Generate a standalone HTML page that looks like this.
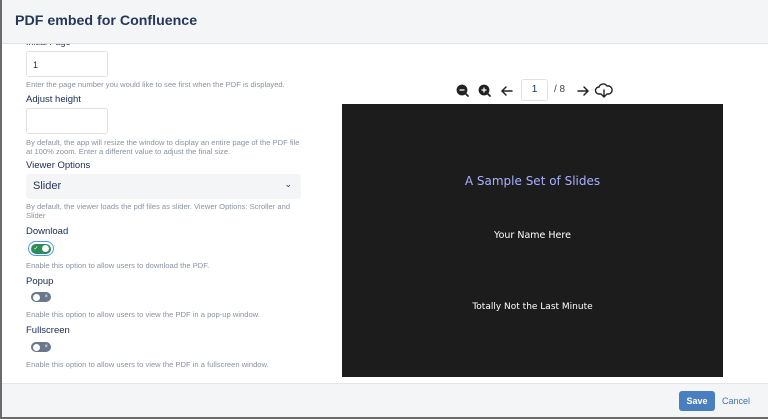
<!DOCTYPE html>
<html><head><style>
*{box-sizing:border-box;margin:0;padding:0}
body{width:768px;height:419px;background:#6b6b6b;font-family:"Liberation Sans",sans-serif;position:relative;overflow:hidden}
.dlg{position:absolute;left:2px;top:0;width:766px;height:417px;background:#fff;overflow:hidden}
.hdr{position:absolute;left:0;top:0;right:0;height:44px;background:#f4f5f7;border-bottom:1px solid #dfe1e6;z-index:2}
.hdr h1{position:absolute;left:13px;top:13px;font-size:14.2px;font-weight:bold;color:#253858}
.ftr{position:absolute;left:0;top:383px;right:0;bottom:0;background:#f4f5f7;border-top:1px solid #e4e5e8}
.t{position:absolute;font-size:9.5px;color:#172b4d}
.h{position:absolute;font-size:7.6px;color:#8993a4;line-height:9px;white-space:nowrap}
.inp{position:absolute;left:24px;width:82px;height:26px;border:1px solid #dfe1e6;border-radius:3px;background:#fff;font-size:9px;color:#172b4d;padding:8px 6px}
.sel{position:absolute;left:24px;top:174px;width:275px;height:25px;background:#f4f5f7;border-radius:3px;font-size:11px;color:#253858;padding:6px 7px}
.tg{position:absolute;left:29px;width:20px;height:10px;border-radius:5px;background:#6b778c}
.tg::before{content:"";position:absolute;left:1.5px;top:1.5px;width:7px;height:7px;border-radius:50%;background:#fff}
.tg.on::before{left:11.5px}
.tg span{position:absolute;right:3px;top:0;font-size:6px;color:#fff;line-height:10px}
.pdf{position:absolute;left:340px;top:104px;width:381px;height:273px;background:#1c1c1c;color:#fff;font-family:"DejaVu Sans","Liberation Sans",sans-serif;text-align:center}
</style></head><body>
<div class="dlg">
<div class="hdr"><h1>PDF embed for Confluence</h1></div>
<div class="t" style="left:24px;top:37px;color:#172b4d;font-size:9px">Initial Page</div>
<div class="inp" style="top:51px">1</div>
<div class="h" style="left:24px;top:80px">Enter the page number you would like to see first when the PDF is displayed.</div>
<div class="t" style="left:24px;top:94px">Adjust height</div>
<div class="inp" style="top:108px"></div>
<div class="h" style="left:24px;top:138px">By default, the app will resize the window to display an entire page of the PDF file<br>at 100% zoom. Enter a different value to adjust the final size.</div>
<div class="t" style="left:24px;top:160px">Viewer Options</div>
<div class="sel">Slider<span style="position:absolute;right:9px;top:5px;font-size:9px">⌄</span></div>
<div class="h" style="left:24px;top:202px">By default, the viewer loads the pdf files as slider. Viewer Options: Scroller and<br>Slider</div>
<div class="t" style="left:24px;top:226px">Download</div>
<div style="position:absolute;left:26px;top:241px;width:26px;height:15px;border:1.5px solid #4c9aff;border-radius:8px"></div>
<div class="tg on" style="top:243.5px;left:28.5px;background:#2e8b57"><span style="left:3px;right:auto">✓</span></div>
<div class="h" style="left:24px;top:261px">Enable this option to allow users to download the PDF.</div>
<div class="t" style="left:24px;top:276px">Popup</div>
<div class="tg" style="top:292px"><span>×</span></div>
<div class="h" style="left:24px;top:310px">Enable this option to allow users to view the PDF in a pop-up window.</div>
<div class="t" style="left:24px;top:325px">Fullscreen</div>
<div class="tg" style="top:342px"><span>×</span></div>
<div class="h" style="left:24px;top:360px">Enable this option to allow users to view the PDF in a fullscreen window.</div>

<svg style="position:absolute;left:452px;top:82px" width="170" height="18" viewBox="0 0 170 18">
<g fill="none" stroke="#222" stroke-width="1.8" stroke-linecap="round">
<circle cx="8" cy="8" r="4.5" fill="#222"/><line x1="11" y1="11" x2="14" y2="14"/><line x1="6" y1="8" x2="10" y2="8" stroke="#fff" stroke-width="1.3"/>
<circle cx="30" cy="8" r="4.5" fill="#222"/><line x1="33" y1="11" x2="36" y2="14"/><line x1="28" y1="8" x2="32" y2="8" stroke="#fff" stroke-width="1.3"/><line x1="30" y1="6" x2="30" y2="10" stroke="#fff" stroke-width="1.3"/>
<path d="M58 9H48M52 5L48 9L52 13" stroke-width="1.5"/>
<path d="M124 9H134M130 5L134 9L130 13" stroke-width="1.5"/>
<path d="M147 12H145A3.5 3.5 0 0 1 145 5A4.5 4.5 0 0 1 153 4A3.5 3.5 0 0 1 155 12H153M150 8V15M147.5 12.5L150 15L152.5 12.5" stroke-width="1.4"/>
</g></svg>
<div style="position:absolute;left:519px;top:79px;width:27px;height:22px;border:1px solid #dfe1e6;border-radius:3px;font-size:10px;text-align:center;line-height:20px;color:#172b4d">1</div>
<div class="t" style="left:552px;top:84px;font-size:10px;color:#444">/ 8</div>

<div class="pdf">
<div style="position:absolute;left:0;right:0;top:70px;font-size:12px;color:#a9b0ff">A Sample Set of Slides</div>
<div style="position:absolute;left:0;right:0;top:126px;font-size:9.5px">Your Name Here</div>
<div style="position:absolute;left:0;right:0;top:198px;font-size:9px">Totally Not the Last Minute</div>
</div>

<div class="ftr">
<div style="position:absolute;left:677px;top:7px;width:36px;height:20px;background:#4a7fbf;border-radius:3px;color:#fff;font-size:9px;font-weight:bold;text-align:center;line-height:20px">Save</div>
<div style="position:absolute;left:720px;top:12px;font-size:9px;color:#3b73af">Cancel</div>
</div>
</div>
</body></html>
